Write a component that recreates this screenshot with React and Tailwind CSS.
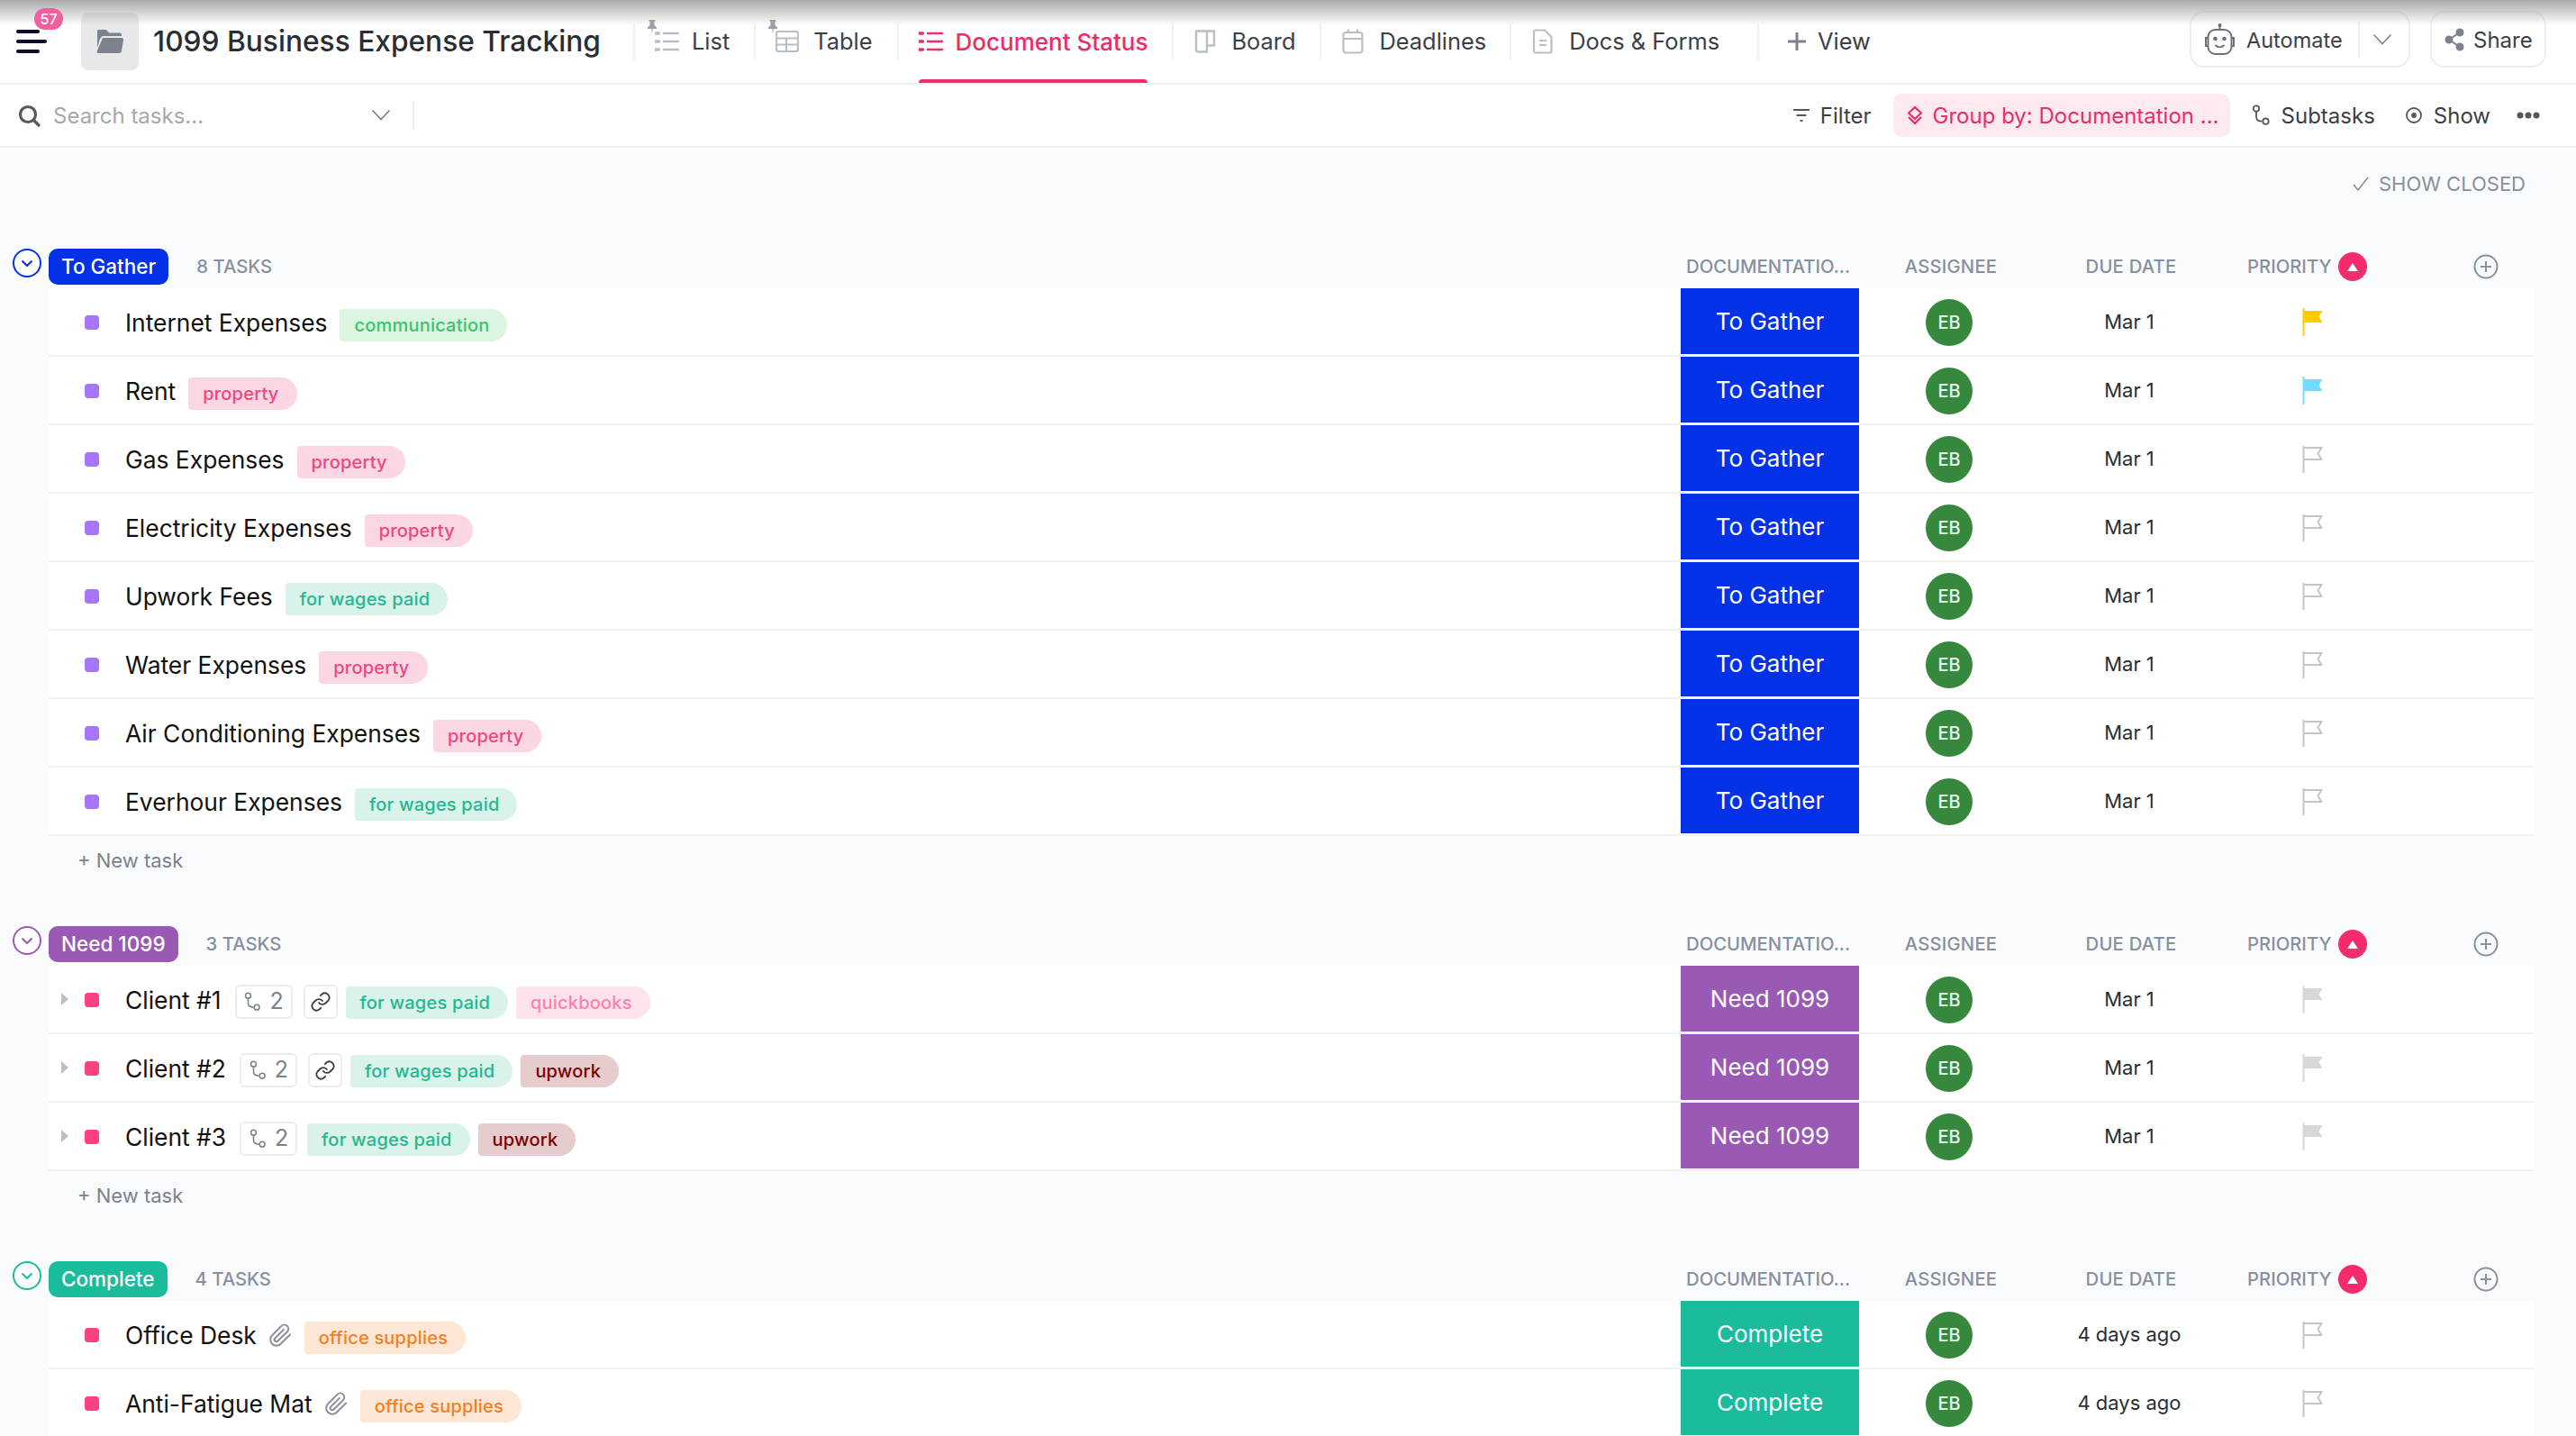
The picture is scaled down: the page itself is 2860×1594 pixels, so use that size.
import React from "react";

const FONT = "font-['Inter','Liberation_Sans',sans-serif]";

const TAGS = {
  communication: "bg-[#dcf5e1] text-[#37c56d]",
  property: "bg-[#fdd6e4] text-[#f0457f]",
  wages: "bg-[#d9f2ea] text-[#22b892]",
  quickbooks: "bg-[#fee3ec] text-[#ff80ad]",
  upwork: "bg-[#e6cccc] text-[#7f0000]",
  office: "bg-[#fde6d4] text-[#f57e20]",
};
const TAGTEXT = { wages: "for wages paid", office: "office supplies" };

function Tag({ k }) {
  return (
    <span className={`h-[36px] pl-[16px] pr-[20px] flex items-center text-[20px] tracking-[0.2px] rounded-l-[4px] rounded-r-[18px] font-medium ${TAGS[k]}`}>
      {TAGTEXT[k] || k}
    </span>
  );
}

function Flag({ type }) {
  const colors = { yellow: "#ffcc00", blue: "#6fddff", gray: "#d8d8d8" };
  if (type === "outline") {
    return (
      <svg width="24" height="32" viewBox="0 0 24 32" fill="none" stroke="#c2c4c9" strokeWidth="2" strokeLinejoin="round">
        <path d="M1.500 1v30" />
        <path d="M1.500 3h20l-4 6.500 4 6.500h-20" />
      </svg>
    );
  }
  return (
    <svg width="24" height="32" viewBox="0 0 24 32" fill={colors[type]}>
      <rect x="0.500" y="0" width="2" height="31" />
      <path d="M1.500 3h21l-4 6.500 4 6.500h-21z" />
    </svg>
  );
}

function SubtaskIcon({ color = "#7c828d", size = 22 }) {
  return (
    <svg width={size} height={size} viewBox="0 0 22 24" fill="none" stroke={color} strokeWidth="1.700">
      <circle cx="5" cy="4.500" r="3.200" />
      <path d="M5 7.700v6c0 3.500 2 5 6.500 5" />
      <circle cx="15.500" cy="18.700" r="3.200" />
    </svg>
  );
}

function LinkIcon() {
  return (
    <svg width="24" height="24" viewBox="0 0 24 24" fill="none" stroke="#3b3f46" strokeWidth="1.800" strokeLinecap="round" strokeLinejoin="round">
      <path d="M10 13a5 5 0 0 0 7.500.5l3-3a5 5 0 0 0-7-7l-1.700 1.700" />
      <path d="M14 11a5 5 0 0 0-7.500-.5l-3 3a5 5 0 0 0 7 7l1.700-1.700" />
    </svg>
  );
}

function ClipIcon() {
  return (
    <svg width="27" height="27" viewBox="0 0 24 24" fill="none" stroke="#8a8f98" strokeWidth="1.800" strokeLinecap="round" strokeLinejoin="round">
      <path d="M21.400 11.050l-9.200 9.200a6 6 0 0 1-8.500-8.500l9.200-9.200a4 4 0 0 1 5.660 5.660l-9.200 9.200a2 2 0 0 1-2.830-2.830l8.500-8.480" />
    </svg>
  );
}

function TaskRow({ t, group }) {
  return (
    <div className="h-[76px] bg-white border-b-2 border-[#f0f1f3] flex items-start">
      <div className="relative h-[74px] flex-1 min-w-0 pl-[40px] flex items-center">
        {t.caret && (
          <span className="absolute left-[14px] top-[30px] w-0 h-0 border-y-[7.500px] border-y-transparent border-l-[8px] border-l-[#b9bec7]" />
        )}
        <span className={`w-[16px] h-[16px] rounded-[4px] mt-[2px] ${t.sq}`} />
        <span className="ml-[29px] text-[26.400px] text-[#111] mt-[4px] whitespace-nowrap">{t.name}</span>
        {t.sub && (
          <span className="ml-[15px] h-[38px] w-[64px] rounded-[6px] border-2 border-[#e9ebf0] flex items-center justify-center gap-[7px] text-[#7c828d] text-[25px] mt-[6px]">
            <SubtaskIcon />
            2
          </span>
        )}
        {t.link && (
          <span className="ml-[12px] h-[38px] w-[38px] rounded-[6px] border-2 border-[#e9ebf0] flex items-center justify-center mt-[6px]">
            <LinkIcon />
          </span>
        )}
        {t.clip && (
          <span className="ml-[13px] flex items-center mt-[2px]"><ClipIcon /></span>
        )}
        <span className={`flex gap-[9px] ${t.sub ? (t.link ? "ml-[9px]" : "ml-[11px]") : t.clip ? "ml-[13px]" : "ml-[14px]"} mt-[8px]`}>
          {t.tags.map((k) => <Tag key={k} k={k} />)}
        </span>
      </div>
      <div className={`w-[198px] h-[73px] flex items-center justify-center text-white text-[26px] ${group.cell}`}>{group.label}</div>
      <div className="w-[200px] h-[76px] flex items-center justify-center">
        <span className="w-[52px] h-[52px] rounded-full bg-[#36883c] text-[#e8f5e9] text-[20px] font-medium flex items-center justify-center">EB</span>
      </div>
      <div className="w-[200px] h-[74px] flex items-center justify-center text-[22px] text-[#2a2e34]">{t.due}</div>
      <div className="flex-none w-[349px] h-[76px] pl-[92px] flex items-center"><Flag type={t.flag} /></div>
    </div>
  );
}

function Group({ g }) {
  const head = "text-[20.300px] font-medium text-[#87909e]";
  return (
    <section className={g.newTask ? "mb-[46px]" : ""}>
      <div className="h-[44px] flex items-start">
        <button className={`ml-[14px] mr-[8px] w-[32px] h-[32px] rounded-full border-2 bg-white flex items-center justify-center ${g.ring}`}>
          <svg width="18" height="18" viewBox="0 0 18 18" fill="none" stroke="currentColor" strokeWidth="2"><path d="M3.500 6.500l5.500 5.500 5.500-5.500" /></svg>
        </button>
        <span className={`h-[40px] px-[14px] rounded-[10px] text-white text-[22.500px] font-medium flex items-center ${g.cell}`}>{g.label}</span>
        <span className={`ml-[31px] h-[40px] flex items-center ${head}`}>{g.count} TASKS</span>
        <div className="flex-1" />
        <div className={`w-[198px] h-[40px] pl-[6px] flex items-center whitespace-nowrap ${head}`}>DOCUMENTATIO...</div>
        <div className={`w-[200px] h-[40px] pl-[4px] tracking-[0.2px] flex items-center justify-center ${head}`}>ASSIGNEE</div>
        <div className={`w-[200px] h-[40px] pl-[4px] tracking-[0.2px] flex items-center justify-center ${head}`}>DUE DATE</div>
        <div className={`w-[396px] h-[40px] pl-[31px] flex items-center ${head}`}>
          PRIORITY
          <span className="ml-[7px] w-[32px] h-[32px] rounded-full bg-[#f42c6c] flex items-center justify-center">
            <span className="w-0 h-0 border-x-[6px] border-x-transparent border-b-[9px] border-b-white" />
          </span>
          <svg className="ml-[118px]" width="28" height="28" viewBox="0 0 28 28" fill="none" stroke="#87909e" strokeWidth="2">
            <circle cx="14" cy="14" r="12.500" />
            <path d="M14 8v12M8 14h12" />
          </svg>
        </div>
      </div>
      <div className="ml-[54px] mr-[47px]">
        {g.tasks.map((t) => <TaskRow key={t.name} t={t} group={g} />)}
      </div>
      {g.newTask && (
        <div className="ml-[86px] h-[54px] flex items-center text-[22px] text-[#7c828d]">+ New task</div>
      )}
    </section>
  );
}

const P = "bg-[#a875ff]";
const R = "bg-[#ff4081]";
const gather = [
  ["Internet Expenses", "communication", "yellow"],
  ["Rent", "property", "blue"],
  ["Gas Expenses", "property", "outline"],
  ["Electricity Expenses", "property", "outline"],
  ["Upwork Fees", "wages", "outline"],
  ["Water Expenses", "property", "outline"],
  ["Air Conditioning Expenses", "property", "outline"],
  ["Everhour Expenses", "wages", "outline"],
].map(([name, tag, flag]) => ({ name, tags: [tag], flag, sq: P, due: "Mar 1" }));

const groups = [
  { label: "To Gather", cell: "bg-[#0231e8]", ring: "border-[#0231e8] text-[#0231e8]", count: 8, tasks: gather, newTask: true },
  {
    label: "Need 1099", cell: "bg-[#9b59b6]", ring: "border-[#9b59b6] text-[#9b59b6]", count: 3, newTask: true,
    tasks: [
      { name: "Client #1", caret: true, sub: true, link: true, tags: ["wages", "quickbooks"], flag: "gray", sq: R, due: "Mar 1" },
      { name: "Client #2", caret: true, sub: true, link: true, tags: ["wages", "upwork"], flag: "gray", sq: R, due: "Mar 1" },
      { name: "Client #3", caret: true, sub: true, tags: ["wages", "upwork"], flag: "gray", sq: R, due: "Mar 1" },
    ],
  },
  {
    label: "Complete", cell: "bg-[#1abc9c]", ring: "border-[#1abc9c] text-[#1abc9c]", count: 4,
    tasks: [
      { name: "Office Desk", clip: true, tags: ["office"], flag: "outline", sq: R, due: "4 days ago" },
      { name: "Anti-Fatigue Mat", clip: true, tags: ["office"], flag: "outline", sq: R, due: "4 days ago" },
    ],
  },
];

function Sep() {
  return <span className="w-[2px] h-[40px] bg-[#eff0f2] flex-none" />;
}

function Pin() {
  return (
    <svg className="absolute left-[-9px] top-[-12px]" width="12" height="16" viewBox="0 0 12 16" fill="#9aa0aa">
      <path d="M2.500 0h7v1.500l-1 .5v4l2.500 2.500v1.500H6.700L6 16l-.7-6H1V8.500L3.500 6V2l-1-.5z" />
    </svg>
  );
}

const S = "#b9bec7";
const tabIcons = {
  list: (c) => (
    <svg width="27" height="24" viewBox="0 0 27 24" fill="none" stroke={c} strokeWidth="2.600">
      <path d="M9 3h18M9 12h18M9 21h18" />
      <path d="M1 3h3.500M1 12h3.500M1 21h3.500" strokeLinecap="round" strokeWidth="3.400" />
    </svg>
  ),
  table: () => (
    <svg width="26" height="24" viewBox="0 0 26 24" fill="none" stroke={S} strokeWidth="2.200">
      <rect x="1" y="1" width="24" height="22" rx="2" />
      <path d="M1 8.500h24M1 15.500h24M12 8.500V23" />
    </svg>
  ),
  board: () => (
    <svg width="24" height="26" viewBox="0 0 24 26" fill="none" stroke={S} strokeWidth="2.400" strokeLinejoin="round">
      <path d="M2 1.500h20v16h-8v7H4a2 2 0 0 1-2-2z" />
      <path d="M14 1.500v16" />
    </svg>
  ),
  cal: () => (
    <svg width="24" height="28" viewBox="0 0 24 28" fill="none" stroke={S} strokeWidth="2.200">
      <rect x="1.500" y="4" width="21" height="22.500" rx="3" />
      <path d="M1.500 11h21M7 0.500v3.500M17 0.500v3.500" />
    </svg>
  ),
  doc: () => (
    <svg width="22" height="28" viewBox="0 0 22 28" fill="none" stroke={S} strokeWidth="2.200" strokeLinejoin="round">
      <path d="M3 1.500h10l7.500 7.500v15.500a2 2 0 0 1-2 2H3a2 2 0 0 1-2-2v-21a2 2 0 0 1 2-2z" />
      <path d="M7 13h8M7 18h8" />
    </svg>
  ),
};

function Tab({ icon, label, pin, active, className = "" }) {
  return (
    <div className={`relative h-full flex items-center ${className}`}>
      <span className="relative flex items-center">
        {pin && <Pin />}
        {icon(active ? "#f42c6c" : S)}
      </span>
      <span className={`whitespace-nowrap ${active ? "text-[26px] text-[#ee2a68] font-medium" : "text-[25.400px] text-[#3c4046]"}`}>{label}</span>
      {active && <span className="absolute left-0 right-0 bottom-0 h-[4px] rounded-t-[4px] bg-[#f42c6c]" />}
    </div>
  );
}

function TopBar() {
  return (
    <header className="relative h-[94px] bg-white border-b-2 border-[#eceef1] flex items-center flex-none">
      <div className="pointer-events-none absolute inset-x-0 top-0 h-[28px] bg-gradient-to-b from-[#a9a9a9] to-transparent z-10" />
      <div className="relative ml-[18px] w-[34px] h-[26px] flex flex-col justify-between">
        <span className="block h-[4px] w-[26px] rounded bg-[#0c0b2b]" />
        <span className="block h-[4px] w-[34px] rounded bg-[#0c0b2b]" />
        <span className="block h-[4px] w-[26px] rounded bg-[#0c0b2b]" />
        <span className="absolute left-[20px] top-[-24px] w-[32px] h-[24px] rounded-[12px] bg-[#f0609e] text-white text-[16px] font-medium flex items-center justify-center z-20">57</span>
      </div>
      <div className="ml-[38px] w-[64px] h-[64px] rounded-[8px] bg-[#e8e8ea] flex items-center justify-center flex-none">
        <svg width="30" height="26" viewBox="0 0 30 26" fill="#7c828d">
          <path d="M2 0h9l3 3.500h12a2 2 0 0 1 2 2V7H7L4 10 1 20V2a2 2 0 0 1 1-2z" />
          <path d="M7 9h21a2 2 0 0 1 2 2.500l-2 11.500a3 3 0 0 1-3 3H2a2 2 0 0 1-1.500-1.500z" />
        </svg>
      </div>
      <h1 className="ml-[16px] w-[533px] text-[31.700px] font-medium text-[#292d34] whitespace-nowrap">1099 Business Expense Tracking</h1>
      <div className="h-[68px] flex items-center self-start mt-[12px]">
        <Sep />
        <Tab icon={tabIcons.list} label="List" pin className="ml-[22px] mr-[27px] gap-[14px]" />
        <Sep />
        <Tab icon={tabIcons.table} label="Table" pin className="ml-[22px] mr-[27px] gap-[16px]" />
        <Sep />
      </div>
      <div className="h-[92px] self-start flex items-center">
        <Tab icon={tabIcons.list} label="Document Status" active className="ml-[22px] mr-[27px] gap-[14px]" />
      </div>
      <div className="h-[68px] flex items-center self-start mt-[12px]">
        <Sep />
        <Tab icon={tabIcons.board} label="Board" className="ml-[23px] mr-[27px] gap-[17px]" />
        <Sep />
        <Tab icon={tabIcons.cal} label="Deadlines" className="ml-[23px] mr-[26px] gap-[17px]" />
        <Sep />
        <Tab icon={tabIcons.doc} label="Docs & Forms" className="ml-[24px] mr-[42px] gap-[18px]" />
        <Sep />
        <div className="ml-[32px] flex items-center gap-[13px] text-[25.400px] text-[#3c4046]">
          <svg width="20" height="20" viewBox="0 0 20 20" stroke="#7c828d" strokeWidth="3"><path d="M10 0v20M0 10h20" /></svg>
          View
        </div>
      </div>
      <div className="flex-1" />
      <div className="w-[245px] h-[63px] rounded-[16px] border-2 border-[#eceef1] flex items-center pl-[15px] self-start mt-[12px]">
        <svg width="33" height="36" viewBox="0 0 33 36" fill="none" stroke="#6b7079" strokeWidth="2">
          <path d="M16.500 1v6" />
          <circle cx="16.500" cy="2" r="1" />
          <rect x="3.500" y="7" width="26" height="27" rx="8" />
          <path d="M3.500 16H1v9h2.500M29.500 16H32v9h-2.500" />
          <circle cx="11.500" cy="17" r="1.300" fill="#6b7079" />
          <circle cx="21.500" cy="17" r="1.300" fill="#6b7079" />
          <path d="M11.500 24c3 3 7 3 10 0" />
        </svg>
        <span className="ml-[13px] pt-[3px] text-[23.500px] text-[#3c4046]">Automate</span>
        <span className="ml-[17px] w-[2px] h-[40px] bg-[#eceef1]" />
        <svg className="ml-[14px]" width="22" height="14" viewBox="0 0 22 14" fill="none" stroke="#7c828d" strokeWidth="1.600"><path d="M1.500 1.500l9.500 10 9.500-10" /></svg>
      </div>
      <div className="ml-[22px] mr-[33px] w-[129px] h-[63px] rounded-[16px] border-2 border-[#eceef1] flex items-center pl-[14px] gap-[10px] self-start mt-[12px] text-[24px] text-[#3c4046]">
        <svg width="22" height="26" viewBox="0 0 22 26" fill="#7c828d" stroke="#7c828d" strokeWidth="2">
          <circle cx="17" cy="5" r="3.500" />
          <circle cx="5" cy="13" r="3.500" />
          <circle cx="17" cy="21" r="3.500" />
          <path d="M17 5L5 13l12 8" fill="none" />
        </svg>
        <span className="pt-[3px]">Share</span>
      </div>
    </header>
  );
}

function FilterBar() {
  return (
    <div className="h-[70px] bg-white border-b-2 border-[#eceef1] flex items-center text-[24px] text-[#3c4046] flex-none">
      <svg className="ml-[20px]" width="25" height="25" viewBox="0 0 25 25" fill="none" stroke="#53575e" strokeWidth="3.200" strokeLinecap="round">
        <circle cx="11" cy="11" r="8.500" />
        <path d="M17.500 17.500l5.500 5.500" />
      </svg>
      <span className="ml-[14px] w-[353px] pt-[1px] text-[#a6a8ad]">Search tasks...</span>
      <svg width="22" height="14" viewBox="0 0 22 14" fill="none" stroke="#7c828d" strokeWidth="1.800"><path d="M1.500 1.500l9.500 10 9.500-10" /></svg>
      <span className="ml-[24px] w-[2px] h-[32px] bg-[#eceef1]" />
      <div className="flex-1" />
      <svg width="18" height="16" viewBox="0 0 18 16" stroke="#53575e" strokeWidth="2"><path d="M0 2h18M3.500 8h11M7.500 14h3" /></svg>
      <span className="ml-[12px] pt-[1px]">Filter</span>
      <div className="ml-[24px] w-[374px] h-[48px] rounded-[10px] bg-[#fdeaef] flex items-center pl-[15px] text-[#ee2a68] whitespace-nowrap">
        <svg width="18" height="20" viewBox="0 0 18 20" fill="none" stroke="#ee2a68" strokeWidth="2.200" strokeLinejoin="round">
          <path d="M9 1l7 6.500-7 6.500-7-6.500z" />
          <path d="M2 12l7 7 7-7" />
        </svg>
        <span className="ml-[11px] pt-[1px]">Group by: Documentation ...</span>
      </div>
      <svg className="ml-[24px]" width="22" height="26" viewBox="0 0 22 24" fill="none" stroke="#53575e" strokeWidth="1.800">
        <circle cx="5" cy="4.500" r="3.200" />
        <path d="M5 7.700v6c0 3.500 2 5 6.500 5" />
        <circle cx="15.500" cy="18.700" r="3.200" />
      </svg>
      <span className="ml-[11px] pt-[1px]">Subtasks</span>
      <svg className="ml-[34px]" width="18" height="18" viewBox="0 0 18 18" fill="none" stroke="#53575e" strokeWidth="1.800">
        <circle cx="9" cy="9" r="8" />
        <circle cx="9" cy="9" r="2" fill="#53575e" />
      </svg>
      <span className="ml-[13px] pt-[1px]">Show</span>
      <svg className="ml-[29px] mr-[40px]" width="26" height="8" viewBox="0 0 26 8" fill="#53575e">
        <circle cx="4" cy="4" r="3.500" />
        <circle cx="13" cy="4" r="3.500" />
        <circle cx="22" cy="4" r="3.500" />
      </svg>
    </div>
  );
}

export default function App() {
  return (
    <div className={`h-[1594px] w-[2860px] overflow-hidden bg-[#fafbfc] flex flex-col ${FONT}`}>
      <TopBar />
      <FilterBar />
      <div className="h-[80px] flex-none flex items-center justify-end pr-[56px] text-[22px] text-[#87909e] gap-[11px]">
        <svg width="18" height="16" viewBox="0 0 18 16" fill="none" stroke="#87909e" strokeWidth="1.600"><path d="M1 9l5 6L17 1" /></svg>
        SHOW CLOSED
      </div>
      <div className="pt-[32px]">
        {groups.map((g) => <Group key={g.label} g={g} />)}
      </div>
    </div>
  );
}
